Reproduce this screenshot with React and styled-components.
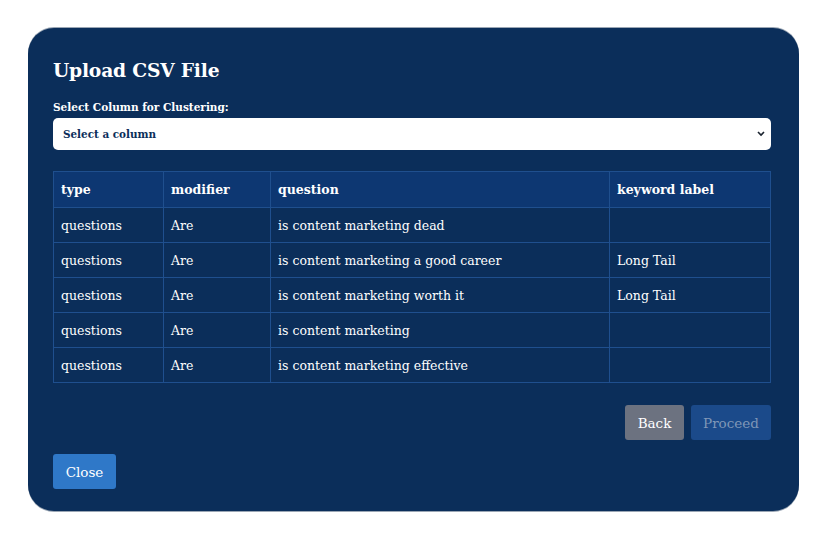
import React from 'react';
import styled, { createGlobalStyle } from 'styled-components';

const GlobalStyle = createGlobalStyle`
  html, body {
    margin: 0;
    padding: 0;
    background: #ffffff;
  }
  body {
    font-family: "DejaVu Serif", "Liberation Serif", serif;
  }
`;

const Page = styled.div`
  width: 828px;
  height: 540px;
  box-sizing: border-box;
  padding: 28px 29px 29px 28px;
`;

const Modal = styled.div`
  box-sizing: border-box;
  height: 483px;
  background: #0b2e5a;
  border-radius: 26px;
  box-shadow: 0 -1px 0 #9aa6b4, 0 1px 0 #9aa6b4;
  padding: 27px 28px 0 25px;
  color: #ffffff;
  display: flow-root;
`;

const Title = styled.h2`
  margin: 4px 0 20px 0;
  font-size: 18.7px;
  font-weight: bold;
  letter-spacing: -0.2px;
`;

const Label = styled.label`
  display: block;
  font-size: 10.5px;
  font-weight: bold;
  margin-bottom: 5px;
`;

const SelectBox = styled.div`
  position: relative;
  height: 32px;
  background: #ffffff;
  border-radius: 5px;
  display: flex;
  align-items: center;
  padding: 0 10px;
  color: #0b2e5a;
  font-size: 10.4px;
  font-weight: bold;
`;

const Chevron = styled.svg`
  position: absolute;
  right: 5px;
  top: 12px;
`;

const Table = styled.table`
  margin-top: 21px;
  width: 100%;
  border-collapse: collapse;
  table-layout: fixed;
  font-size: 12.5px;
`;

const Th = styled.th`
  box-sizing: border-box;
  background: #0d3772;
  border: 1px solid #1f4f8e;
  height: 36px;
  text-align: left;
  padding: 0 7px;
  font-weight: bold;
  width: ${p => p.$w || 'auto'};
`;

const Td = styled.td`
  border: 1px solid #1f4f8e;
  height: 34px;
  padding: 0 7px;
  white-space: nowrap;
`;

const Actions = styled.div`
  display: flex;
  justify-content: flex-end;
  gap: 7px;
  margin-top: 22px;
`;

const Button = styled.button`
  font-family: "DejaVu Serif", "Liberation Serif", serif;
  font-size: 13.5px;
  height: 35px;
  width: ${p => p.$w}px;
  border: none;
  border-radius: 3px;
  padding: 0;
  color: ${p => (p.$variant === 'disabled' ? '#7f97b7' : '#ffffff')};
  background: ${p =>
    p.$variant === 'secondary'
      ? '#6c7280'
      : p.$variant === 'disabled'
      ? '#1b4a8a'
      : '#2f78c8'};
`;

const Footer = styled.div`
  margin-top: 14px;
`;

const rows = [
  ['questions', 'Are', 'is content marketing dead', ''],
  ['questions', 'Are', 'is content marketing a good career', 'Long Tail'],
  ['questions', 'Are', 'is content marketing worth it', 'Long Tail'],
  ['questions', 'Are', 'is content marketing', ''],
  ['questions', 'Are', 'is content marketing effective', ''],
];

export default function App() {
  return (
    <Page>
      <GlobalStyle />
      <Modal>
        <Title>Upload CSV File</Title>
        <Label>Select Column for Clustering:</Label>
        <SelectBox>
          Select a column
          <Chevron width="10" height="8" viewBox="0 0 10 8">
            <path d="M2 2 L5 5 L8 2" fill="none" stroke="#1b2430" strokeWidth="1.6" />
          </Chevron>
        </SelectBox>
        <Table>
          <thead>
            <tr>
              <Th $w="110px">type</Th>
              <Th $w="107px">modifier</Th>
              <Th $w="339px">question</Th>
              <Th>keyword label</Th>
            </tr>
          </thead>
          <tbody>
            {rows.map((r, i) => (
              <tr key={i}>
                {r.map((c, j) => (
                  <Td key={j}>{c}</Td>
                ))}
              </tr>
            ))}
          </tbody>
        </Table>
        <Actions>
          <Button $variant="secondary" $w={59}>Back</Button>
          <Button $variant="disabled" $w={80}>Proceed</Button>
        </Actions>
        <Footer>
          <Button $w={63}>Close</Button>
        </Footer>
      </Modal>
    </Page>
  );
}
